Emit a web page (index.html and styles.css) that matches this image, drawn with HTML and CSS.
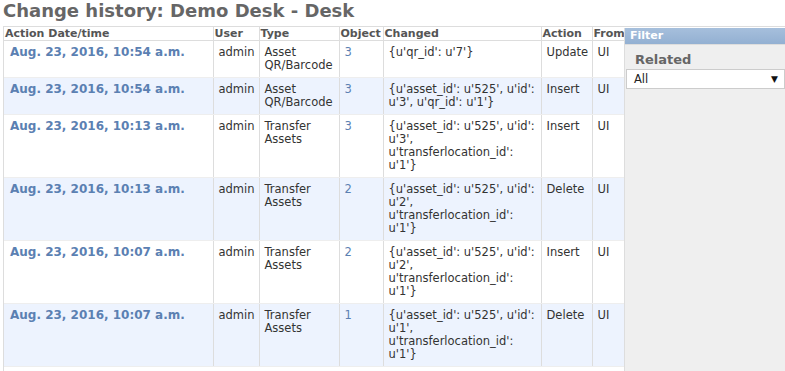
FILE: index.html
```html
<!DOCTYPE html>
<html>
<head>
<meta charset="utf-8">
<title>Change history: Demo Desk - Desk</title>
<link rel="stylesheet" href="styles.css">
</head>
<body>
<div class="content">
  <h1 class="title">Change history: Demo Desk - Desk</h1>
  <div class="changelist">
    <table class="history">
      <colgroup>
        <col class="c-date"><col class="c-user"><col class="c-type"><col class="c-obj"><col class="c-changed"><col class="c-action"><col>
      </colgroup>
      <thead>
        <tr><th>Action Date/time</th><th>User</th><th>Type</th><th>Object</th><th>Changed</th><th>Action</th><th>From</th></tr>
      </thead>
      <tbody>
        <tr class="row1"><th><a href="#">Aug. 23, 2016, 10:54 a.m.</a></th><td>admin</td><td>Asset QR/Barcode</td><td><a href="#">3</a></td><td>{u'qr_id': u'7'}</td><td>Update</td><td>UI</td></tr>
        <tr class="row2"><th><a href="#">Aug. 23, 2016, 10:54 a.m.</a></th><td>admin</td><td>Asset QR/Barcode</td><td><a href="#">3</a></td><td>{u'asset_id': u'525', u'id': u'3', u'qr_id': u'1'}</td><td>Insert</td><td>UI</td></tr>
        <tr class="row1"><th><a href="#">Aug. 23, 2016, 10:13 a.m.</a></th><td>admin</td><td>Transfer Assets</td><td><a href="#">3</a></td><td>{u'asset_id': u'525', u'id': u'3', u'transferlocation_id': u'1'}</td><td>Insert</td><td>UI</td></tr>
        <tr class="row2"><th><a href="#">Aug. 23, 2016, 10:13 a.m.</a></th><td>admin</td><td>Transfer Assets</td><td><a href="#">2</a></td><td>{u'asset_id': u'525', u'id': u'2', u'transferlocation_id': u'1'}</td><td>Delete</td><td>UI</td></tr>
        <tr class="row1"><th><a href="#">Aug. 23, 2016, 10:07 a.m.</a></th><td>admin</td><td>Transfer Assets</td><td><a href="#">2</a></td><td>{u'asset_id': u'525', u'id': u'2', u'transferlocation_id': u'1'}</td><td>Insert</td><td>UI</td></tr>
        <tr class="row2"><th><a href="#">Aug. 23, 2016, 10:07 a.m.</a></th><td>admin</td><td>Transfer Assets</td><td><a href="#">1</a></td><td>{u'asset_id': u'525', u'id': u'1', u'transferlocation_id': u'1'}</td><td>Delete</td><td>UI</td></tr>
      </tbody>
    </table>
    <div class="filter">
      <h2 class="filter-title">Filter</h2>
      <h3 class="filter-label">Related</h3>
      <div class="select"><span>All</span><span class="arrow">&#9660;</span></div>
    </div>
  </div>
</div>
</body>
</html>
```
FILE: styles.css
```css
html, body {
  margin: 0;
  padding: 0;
  background: #fff;
  overflow: hidden;
}
body {
  font-family: "DejaVu Sans", Verdana, sans-serif;
  font-size: 11px;
  color: #333;
}
a {
  color: #5b80b2;
  text-decoration: none;
}
.content {
  padding: 0 0 0 3px;
}
.title {
  margin: 0 0 4px 0;
  font-size: 18px;
  line-height: 22px;
  font-weight: bold;
  color: #666;
}
.changelist {
  position: relative;
  min-height: 345px;
  border-left: 1px solid #ddd;
}
.history {
  width: 100%;
  table-layout: fixed;
  border-collapse: collapse;
  border-top: 1px solid #ddd;
}
.c-date { width: 209px; }
.c-user { width: 46px; }
.c-type { width: 80px; }
.c-obj { width: 44px; }
.c-changed { width: 158px; }
.c-action { width: 51px; }
.history thead th {
  text-align: left;
  font-size: 11px;
  line-height: 13px;
  font-weight: bold;
  color: #555;
  padding: 0 1px;
  border-left: 1px solid #ddd;
  border-bottom: 1px solid #ddd;
  white-space: nowrap;
  overflow: hidden;
}
.history tbody th,
.history tbody td {
  vertical-align: top;
  text-align: left;
  padding: 5px 5px;
  line-height: 13px;
  border-left: 1px solid #ddd;
  border-bottom: 1px solid #eee;
}
.history thead th:first-child,
.history tbody th {
  border-left: none;
}
.history tbody th {
  font-size: 12px;
  font-weight: bold;
  padding-left: 6px;
}
.history tbody td {
  font-size: 11.5px;
}
.row1 { background: #fff; }
.row2 { background: #edf3fe; }

.filter {
  position: absolute;
  top: 2px;
  right: 0;
  width: 160px;
  height: 360px;
  background: #efefef;
  border-left: 1px solid #ddd;
}
.filter-title {
  margin: 0;
  padding: 1px 5px 2px;
  font-size: 11px;
  line-height: 13px;
  font-weight: bold;
  color: #fff;
  background: linear-gradient(#a6bfdc, #93b0d2);
  border-bottom: 1px solid #ddd;
}
.filter-label {
  margin: 7px 0 1px 0;
  padding: 0 10px;
  font-size: 13px;
  line-height: 16px;
  font-weight: bold;
  color: #666;
}
.select {
  display: flex;
  justify-content: space-between;
  align-items: center;
  margin-left: 1px;
  height: 18px;
  padding: 0 6px 0 7px;
  background: #fff;
  border: 1px solid #ccc;
  font-size: 11.5px;
  color: #222;
}
.arrow {
  font-size: 9px;
  color: #111;
}
```
